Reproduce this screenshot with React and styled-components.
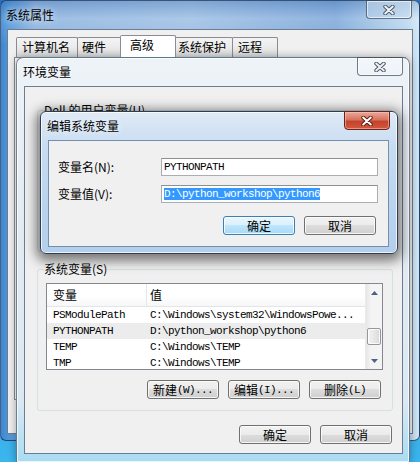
import React from 'react';
import styled, { createGlobalStyle, css } from 'styled-components';

const CJK = `"Noto Sans CJK SC", "Noto Sans", sans-serif`;
const MONO = `"Liberation Mono", "DejaVu Sans Mono", monospace`;

const GlobalStyle = createGlobalStyle`
  html, body {
    margin: 0;
    padding: 0;
    width: 420px;
    height: 462px;
    overflow: hidden;
  }
  body {
    font-family: ${CJK};
    font-size: 12px;
    color: #000;
  }
`;

const Desktop = styled.div`
  position: relative;
  width: 420px;
  height: 462px;
  overflow: hidden;
  background: linear-gradient(180deg, #2a6fbf 0%, #3d8fd6 60%, #3bb6ee 100%);
`;

const frames = {
  main: css`
    background:
      linear-gradient(180deg, rgba(40,90,160,0.25) 0%, rgba(255,255,255,0.15) 4%, rgba(255,255,255,0) 10%),
      linear-gradient(90deg, #3a86d4 0%, #4e95d8 1.5%, #8db3df 8%, #9dbfe4 45%, #7ea8da 80%, #b9d6ee 97%, #d2e6f4 100%);
    border: 1px solid rgba(20, 40, 70, 0.7);
    border-radius: 6px;
  `,
  inactive: css`
    background: linear-gradient(180deg, #eef3f8 0%, #e4ebf2 40%, #dbe8f2 85%, #a8dcf4 100%);
    border: 1px solid rgba(40, 55, 75, 0.6);
    border-radius: 7px 7px 0 0;
    box-shadow: 0 0 8px rgba(0, 0, 0, 0.35), inset 0 0 0 1px rgba(255,255,255,0.7);
  `,
  active: css`
    background: linear-gradient(180deg, #dfeaf6 0%, #c8dcf1 25%, #bcd4ee 60%, #b4cfeb 100%);
    border: 1px solid #2e3e52;
    border-radius: 6px;
    box-shadow: 0 3px 12px 4px rgba(0, 0, 0, 0.5), inset 0 0 0 1px rgba(255,255,255,0.75);
  `,
};

const Window = styled.div`
  position: absolute;
  left: ${p => p.$x}px;
  top: ${p => p.$y}px;
  width: ${p => p.$w}px;
  height: ${p => p.$h}px;
  box-sizing: border-box;
  display: flex;
  flex-direction: column;
  padding: 0 ${p => p.$pr}px ${p => p.$pb}px ${p => p.$pl}px;
  ${p => frames[p.$variant]}
`;

const TitleBar = styled.div`
  flex: none;
  height: ${p => p.$h}px;
  display: flex;
  justify-content: space-between;
  align-items: flex-start;
  margin-left: ${p => -p.$pl}px;
  margin-right: ${p => -p.$pr}px;
  padding: 0 ${p => p.$cr}px 0 ${p => p.$pl - 1}px;
`;

const Title = styled.div`
  padding-top: 6px;
  line-height: 16px;
  font-size: 12px;
  color: #000;
  text-shadow: 0 0 6px rgba(255, 255, 255, 0.9);
`;

const CloseButton = styled.div`
  width: 46px;
  height: 19px;
  margin-top: -1px;
  box-sizing: border-box;
  display: flex;
  align-items: center;
  justify-content: center;
  border-radius: 0 0 4px 4px;
  ${p => p.$red
    ? css`
      border: 1px solid #6b2218;
      background: linear-gradient(180deg, #e9a99b 0%, #d8745f 45%, #c5432c 55%, #d2573f 100%);
      box-shadow: inset 0 0 0 1px rgba(255, 200, 190, 0.55);
    `
    : css`
      border: 1px solid rgba(40, 55, 75, 0.65);
      background: linear-gradient(180deg, rgba(255,255,255,0.35), rgba(255,255,255,0.12));
      box-shadow: inset 0 0 0 1px rgba(255, 255, 255, 0.6);
    `}
`;

const CloseGlyph = ({ red }) => (
  <svg width="12" height="10" viewBox="0 0 12 10">
    <path d="M2.2 1.5 L9.8 8.5 M9.8 1.5 L2.2 8.5" stroke={red ? '#5a1a10' : '#4a5563'} strokeWidth="3.8" strokeLinecap="round" />
    <path d="M2.2 1.5 L9.8 8.5 M9.8 1.5 L2.2 8.5" stroke={red ? '#ffffff' : '#eef2f6'} strokeWidth="2" strokeLinecap="round" />
  </svg>
);

const Client = styled.div`
  flex: 1;
  min-height: 0;
  display: flex;
  flex-direction: column;
  background: #f0f0f0;
  border: 1px solid ${p => p.$border || '#6d7d90'};
  overflow: hidden;
`;

/* tabs of 系统属性 */
const TabStrip = styled.div`
  display: flex;
  align-items: flex-end;
  height: 22px;
  margin: 5px 0 0 8px;
`;

const Tab = styled.div`
  box-sizing: border-box;
  flex: none;
  width: ${p => p.$w}px;
  height: ${p => (p.$selected ? 22 : 20)}px;
  padding-left: ${p => p.$pad}px;
  line-height: 18px;
  font-size: 12px;
  white-space: nowrap;
  border: 1px solid #898c95;
  border-bottom: none;
  border-radius: 2px 2px 0 0;
  ${p => p.$selected
    ? css`
      background: #fff;
      margin: 0 -2px;
      position: relative;
      z-index: 1;
    `
    : css`
      margin-right: -1px;
      background: linear-gradient(180deg, #f4f4f4 0%, #ebebeb 50%, #dcdcdc 100%);
    `}
`;

const TabPanel = styled.div`
  height: 341px;
  margin: 0 6px 0 6px;
  background: #fff;
  border: 1px solid #898c95;
`;

/* 环境变量 */
const GroupBox = styled.fieldset`
  margin: ${p => p.$top}px 9px 0 12px;
  padding: 6px 9px 11px 8px;
  border: 1px solid #d5dfe5;
  border-radius: 3px;
  min-width: 0;
`;

const Legend = styled.legend`
  padding: 0;
  margin-left: -2px;
  line-height: 16px;
  font-size: 12px;
`;

const CoveredBody = styled.div`
  height: 116px;
`;

const ListView = styled.div`
  height: 87px;
  box-sizing: border-box;
  border: 1px solid #828790;
  background: #fff;
  display: flex;
`;

const ListBody = styled.div`
  flex: 1;
  min-width: 0;
  display: flex;
  flex-direction: column;
  overflow: hidden;
`;

const HeaderRow = styled.div`
  flex: none;
  display: flex;
  height: 23px;
  box-sizing: border-box;
  border-bottom: 1px solid #e5e5e5;
  background: linear-gradient(180deg, #ffffff 0%, #ffffff 55%, #f6f7f9 100%);
`;

const HeaderCell = styled.div`
  box-sizing: border-box;
  width: ${p => (p.$w ? `${p.$w}px` : 'auto')};
  flex: ${p => (p.$w ? 'none' : 1)};
  padding-left: ${p => p.$pad}px;
  line-height: 22px;
  font-size: 12px;
  border-right: ${p => (p.$w ? '1px solid #e3e8ee' : 'none')};
`;

const Row = styled.div`
  flex: none;
  display: flex;
  height: 16px;
  line-height: 16px;
  font-family: ${MONO};
  font-size: 11px;
  letter-spacing: -0.6px;
  white-space: nowrap;
  background: ${p => (p.$selected ? '#ececec' : 'transparent')};
`;

const Cell = styled.div`
  box-sizing: border-box;
  width: ${p => (p.$w ? `${p.$w}px` : 'auto')};
  flex: ${p => (p.$w ? 'none' : 1)};
  padding-left: ${p => p.$pad}px;
  overflow: hidden;
`;

const ScrollBar = styled.div`
  flex: none;
  width: 17px;
  display: flex;
  flex-direction: column;
  background: linear-gradient(90deg, #e6e6e6 0%, #f4f4f4 30%, #f4f4f4 100%);
  border-left: 1px solid #eaeaea;
  box-sizing: border-box;
`;

const ArrowBox = styled.div`
  flex: none;
  height: 17px;
  display: flex;
  align-items: center;
  justify-content: center;
`;

const Track = styled.div`
  flex: 1;
  padding-top: 27px;
`;

const Thumb = styled.div`
  height: 17px;
  margin: 0 1px;
  box-sizing: border-box;
  border: 1px solid #979797;
  border-radius: 2px;
  background: linear-gradient(90deg, #f3f3f3 0%, #e8e8e8 50%, #d8d8d8 100%);
  box-shadow: inset 0 0 0 1px rgba(255,255,255,0.8);
`;

const Arrow = ({ down }) => (
  <svg width="7" height="4" viewBox="0 0 7 4">
    <path d={down ? 'M0 0 H7 L3.5 4 Z' : 'M0 4 H7 L3.5 0 Z'} fill="#4d6185" />
  </svg>
);

const ButtonRow = styled.div`
  display: flex;
  justify-content: flex-end;
  gap: 9px;
  margin: ${p => p.$top}px ${p => p.$right}px 0 0;
`;

const Button = styled.div`
  width: 72px;
  height: 19px;
  box-sizing: border-box;
  display: flex;
  align-items: center;
  justify-content: center;
  font-size: 12px;
  border-radius: 3px;
  white-space: nowrap;
  ${p => p.$default
    ? css`
      border: 1px solid #3c7fb1;
      background: linear-gradient(180deg, #eaf6fd 0%, #d9f0fc 50%, #bee6fd 50%, #a7d9f5 100%);
      box-shadow: inset 0 0 0 1px rgba(255,255,255,0.75);
    `
    : css`
      border: 1px solid #707070;
      background: linear-gradient(180deg, #f2f2f2 0%, #ebebeb 50%, #dddddd 50%, #cfcfcf 100%);
      box-shadow: inset 0 0 0 1px rgba(252,252,252,0.85);
    `}
`;

const Mono = styled.span`
  font-family: ${MONO};
  font-size: 11px;
  letter-spacing: -0.6px;
`;

/* 编辑系统变量 */
const Form = styled.div`
  display: grid;
  grid-template-columns: 103px 217px;
  row-gap: 9px;
  padding: 17px 0 0 9px;
`;

const FieldLabel = styled.div`
  height: 18px;
  line-height: 18px;
  font-size: 12px;
`;

const TextBox = styled.div`
  height: 18px;
  box-sizing: border-box;
  border: 1px solid #abadb3;
  border-top-color: #8e8f8f;
  background: #fff;
  padding: 0 2px;
  line-height: 16px;
  font-family: ${MONO};
  font-size: 11px;
  letter-spacing: -0.6px;
  white-space: nowrap;
`;

const Selected = styled.span`
  background: #3399ff;
  color: #fff;
`;

const tabs = [
  { label: '计算机名', w: 62, pad: 5 },
  { label: '硬件', w: 46, pad: 4 },
  { label: '高级', w: 56, pad: 9, selected: true },
  { label: '系统保护', w: 59, pad: 3 },
  { label: '远程', w: 46, pad: 5 },
];

const systemRows = [
  { name: 'PSModulePath', value: 'C:\\Windows\\system32\\WindowsPowe...' },
  { name: 'PYTHONPATH', value: 'D:\\python_workshop\\python6', selected: true },
  { name: 'TEMP', value: 'C:\\Windows\\TEMP' },
  { name: 'TMP', value: 'C:\\Windows\\TEMP' },
];

const VarList = ({ rows }) => (
  <ListView>
    <ListBody>
      <HeaderRow>
        <HeaderCell $w={100} $pad={6}>变量</HeaderCell>
        <HeaderCell $pad={3}>值</HeaderCell>
      </HeaderRow>
      {rows.map(r => (
        <Row key={r.name} $selected={r.selected}>
          <Cell $w={100} $pad={6}>{r.name}</Cell>
          <Cell $pad={3}>{r.value}</Cell>
        </Row>
      ))}
    </ListBody>
    <ScrollBar>
      <ArrowBox><Arrow /></ArrowBox>
      <Track><Thumb /></Track>
      <ArrowBox><Arrow down /></ArrowBox>
    </ScrollBar>
  </ListView>
);

const App = () => {
  return (
    <Desktop>
      <GlobalStyle />

      <Window $variant="main" $x={0} $y={0} $w={420} $h={441} $pl={6} $pr={6} $pb={6}>
        <TitleBar $h={28} $pl={6} $pr={6} $cr={7}>
          <Title>系统属性</Title>
          <CloseButton><CloseGlyph /></CloseButton>
        </TitleBar>
        <Client>
          <TabStrip>
            {tabs.map(t => (
              <Tab key={t.label} $w={t.w} $pad={t.pad} $selected={t.selected}>{t.label}</Tab>
            ))}
          </TabStrip>
          <TabPanel />
        </Client>
      </Window>

      <Window $variant="inactive" $x={16} $y={57} $w={394} $h={406} $pl={7} $pr={6} $pb={8}>
        <TitleBar $h={28} $pl={7} $pr={6} $cr={6}>
          <Title>环境变量</Title>
          <CloseButton><CloseGlyph /></CloseButton>
        </TitleBar>
        <Client>
          {/* user variables: fully covered by the edit dialog */}
          <GroupBox $top={15}>
            <Legend>Dell 的用户变量(U)</Legend>
            <CoveredBody />
          </GroupBox>
          <GroupBox $top={9}>
            <Legend>系统变量(S)</Legend>
            <VarList rows={systemRows} />
            <ButtonRow $top={10} $right={2}>
              <Button>新建<Mono>(W)...</Mono></Button>
              <Button>编辑<Mono>(I)...</Mono></Button>
              <Button>删除<Mono>(L)</Mono></Button>
            </ButtonRow>
          </GroupBox>
          <ButtonRow $top={14} $right={10}>
            <Button>确定</Button>
            <Button>取消</Button>
          </ButtonRow>
        </Client>
      </Window>

      <Window $variant="active" $x={40} $y={111} $w={358} $h={143} $pl={7} $pr={8} $pb={6}>
        <TitleBar $h={28} $pl={7} $pr={8} $cr={7}>
          <Title>编辑系统变量</Title>
          <CloseButton $red><CloseGlyph red /></CloseButton>
        </TitleBar>
        <Client $border="#7390b0">
          <Form>
            <FieldLabel>变量名(N):</FieldLabel>
            <TextBox>PYTHONPATH</TextBox>
            <FieldLabel>变量值(V):</FieldLabel>
            <TextBox><Selected>D:\python_workshop\python6</Selected></TextBox>
          </Form>
          <ButtonRow $top={13} $right={12}>
            <Button $default>确定</Button>
            <Button>取消</Button>
          </ButtonRow>
        </Client>
      </Window>
    </Desktop>
  );
};

export default App;
